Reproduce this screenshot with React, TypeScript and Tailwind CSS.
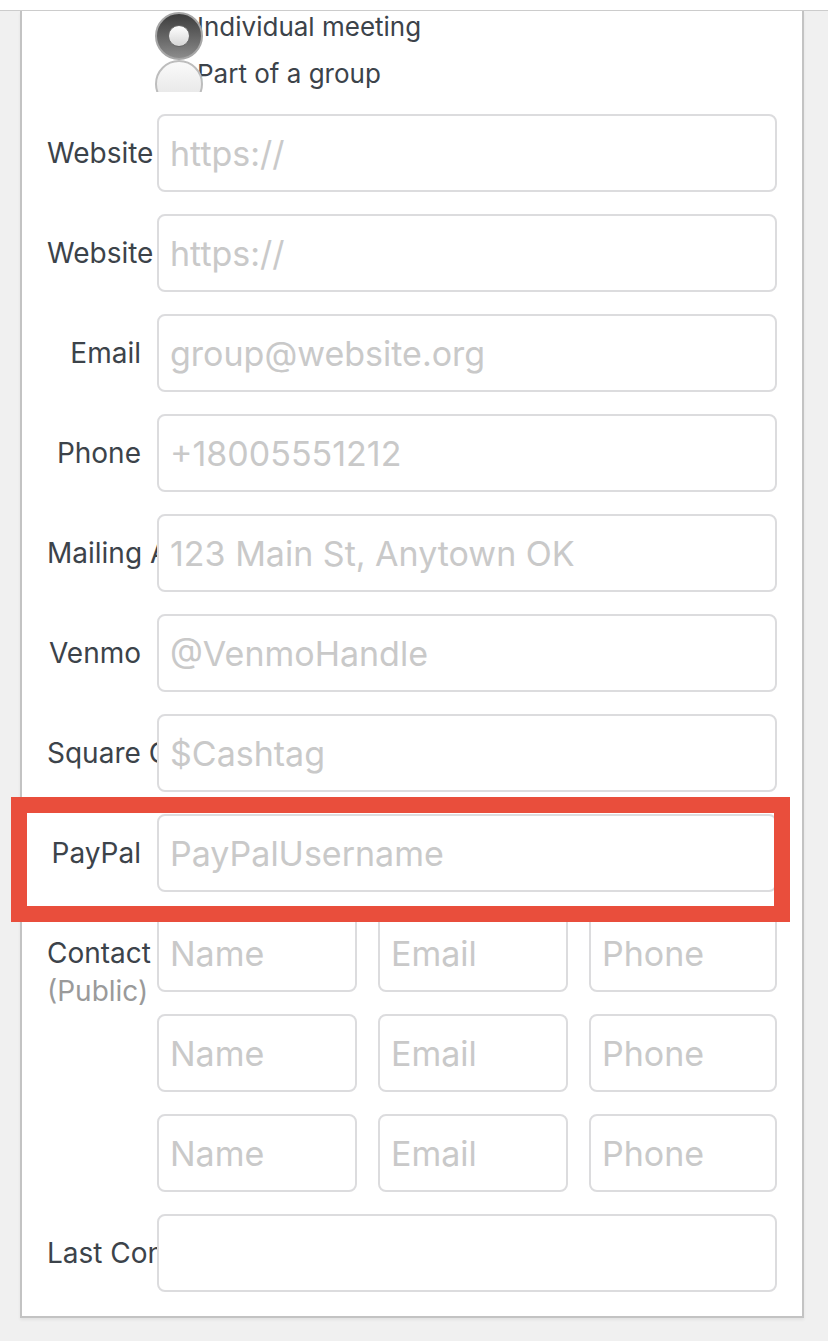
import React from "react";

const rows = [
  { label: "Website", placeholder: "https://" },
  { label: "Website", placeholder: "https://" },
  { label: "Email", placeholder: "group@website.org" },
  { label: "Phone", placeholder: "+18005551212" },
  { label: "Mailing Address", placeholder: "123 Main St, Anytown OK" },
  { label: "Venmo", placeholder: "@VenmoHandle" },
  { label: "Square Cash App", placeholder: "$Cashtag" },
  { label: "PayPal", placeholder: "PayPalUsername" },
];

const inputCls =
  "h-[78px] rounded-[8px] border-2 border-[#dcdcde] bg-white px-[11px] text-[34px] text-[#3c434a] outline-none placeholder:text-[#c9c9c9]";

function Label({ children }: { children: React.ReactNode }) {
  return (
    <div className="w-[110px] shrink-0 overflow-hidden whitespace-nowrap pr-[16px] text-right text-[28px] leading-[38px] text-[#3c434a]">
      {children}
    </div>
  );
}

export default function App() {
  return (
    <div
      className="relative min-h-screen bg-[#f0f0f0]"
      style={{ fontFamily: "Inter, 'Noto Sans', sans-serif" }}
    >
      <div className="h-[11px] border-b border-[#cccccc] bg-white" />

      <div className="ml-[20px] w-[784px] border-x-2 border-b-2 border-[#c3c3c3] bg-white pb-[24px] pl-[25px] shadow-[0_2px_3px_rgba(0,0,0,0.06)]">
        {/* meeting type */}
        <div className="pl-[108px]">
          <div className="flex h-[47px] items-start">
            <span className="relative z-10 mt-[1px] flex h-[48px] w-[48px] shrink-0 items-center justify-center rounded-full border-2 border-[#a7a7a7] bg-linear-to-b from-[#3d3d3d] to-[#8c8c8c]">
              <span className="h-[22px] w-[22px] rounded-full border border-[#666] bg-linear-to-b from-white to-[#d6d6d6]" />
            </span>
            <span className="-ml-[6px] text-[26px] leading-[32px] text-[#3c434a]">
              Individual meeting
            </span>
          </div>
          <div className="flex h-[34px] items-start overflow-hidden">
            <span className="relative z-10 mt-[2px] h-[48px] w-[48px] shrink-0 rounded-full border-2 border-[#bdbdbd] bg-linear-to-b from-[#fafafa] to-[#e2e2e2]" />
            <span className="-ml-[6px] text-[26px] leading-[32px] text-[#3c434a]">
              Part of a group
            </span>
          </div>
        </div>

        <div className="mt-[22px] flex flex-col gap-[22px]">
          {rows.map((r, i) => (
            <div key={i} className="flex items-center">
              <Label>{r.label}</Label>
              <input className={`w-[620px] ${inputCls}`} placeholder={r.placeholder} />
            </div>
          ))}

          <div className="flex items-start">
            <div className="w-[110px] shrink-0 overflow-hidden whitespace-nowrap pr-[16px] pt-[20px] text-[28px] leading-[38px]">
              <div className="text-[#3c434a]">Contact</div>
              <div className="text-[#9a9a9a]">(Public)</div>
            </div>
            <div className="flex flex-col gap-[22px]">
              {[0, 1, 2].map((k) => (
                <div key={k} className="flex gap-[21px]">
                  <input className={`w-[200px] ${inputCls}`} placeholder="Name" />
                  <input className={`w-[190px] ${inputCls}`} placeholder="Email" />
                  <input className={`w-[188px] ${inputCls}`} placeholder="Phone" />
                </div>
              ))}
            </div>
          </div>

          <div className="flex items-center">
            <Label>Last Contact</Label>
            <input className={`w-[620px] ${inputCls}`} />
          </div>
        </div>
      </div>

      {/* highlight annotation */}
      <div className="pointer-events-none absolute left-[11px] top-[797px] h-[125px] w-[779px] border-[16px] border-[#e94e3c]" />
    </div>
  );
}
